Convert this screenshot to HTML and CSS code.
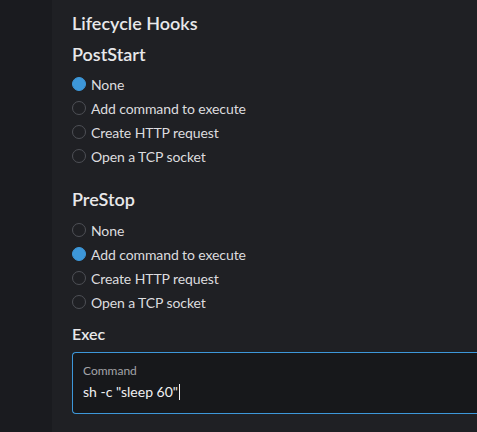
FILE: index.html
```html
<!DOCTYPE html>
<html>
<head>
<meta charset="utf-8">
<link rel="stylesheet" href="styles.css">
</head>
<body>
<div class="layout">
  <aside class="sidebar"></aside>
  <main class="main">
    <h2 class="title">Lifecycle Hooks</h2>
    <section class="hook">
      <h3 class="hook-title">PostStart</h3>
      <div class="options">
        <div class="option"><span class="radio checked"></span>None</div>
        <div class="option"><span class="radio"></span>Add command to execute</div>
        <div class="option"><span class="radio"></span>Create HTTP request</div>
        <div class="option"><span class="radio"></span>Open a TCP socket</div>
      </div>
    </section>
    <section class="hook prestop">
      <h3 class="hook-title">PreStop</h3>
      <div class="options">
        <div class="option"><span class="radio"></span>None</div>
        <div class="option"><span class="radio checked"></span>Add command to execute</div>
        <div class="option"><span class="radio"></span>Create HTTP request</div>
        <div class="option"><span class="radio"></span>Open a TCP socket</div>
      </div>
    </section>
    <h4 class="exec-title">Exec</h4>
    <div class="field">
      <div class="field-label">Command</div>
      <div class="field-value">sh -c "sleep 60"<span class="caret"></span></div>
    </div>
  </main>
</div>
</body>
</html>
```
FILE: styles.css
```css
html, body {
  margin: 0;
  padding: 0;
  background: #1f2024;
  height: 100%;
  overflow: hidden;
}
body {
  font-family: Lato, "Noto Sans", sans-serif;
  color: #e8e8ea;
}
.layout {
  display: flex;
  height: 432px;
}
.sidebar {
  width: 52px;
  flex: none;
  background: #1a1b1f;
}
.main {
  flex: 1;
  padding: 11px 0 0 20px;
  min-width: 0;
}
.title {
  margin: 0;
  font-size: 18px;
  font-weight: 600;
  line-height: 24px;
}
.hook-title {
  margin: 7px 0 0;
  font-size: 18px;
  font-weight: 600;
  line-height: 24px;
}
.options {
  display: flex;
  flex-direction: column;
  margin-top: 6px;
}
.option {
  display: flex;
  align-items: center;
  height: 24px;
  font-size: 14px;
  letter-spacing: -0.1px;
  color: #dcdcdf;
}
.radio {
  width: 12px;
  height: 12px;
  border: 1px solid #4e5056;
  border-radius: 50%;
  margin-right: 5px;
  box-sizing: content-box;
  flex: none;
}
.radio.checked {
  background: #3d97d9;
  border-color: #3d97d9;
}
.prestop {
  margin-top: 19px;
}
.prestop .options {
  margin-top: 7px;
}
.exec-title {
  margin: 8px 0 0;
  font-size: 16px;
  font-weight: 600;
  line-height: 24px;
}
.field {
  margin-top: 6px;
  height: 62px;
  box-sizing: border-box;
  border: 1px solid #3d97d9;
  border-right: none;
  border-radius: 4px 0 0 4px;
  background: #17181b;
  padding: 10px 0 0 10px;
}
.field-label {
  font-size: 12px;
  color: #a3a4a8;
  line-height: 16px;
}
.field-value {
  margin-top: 3px;
  font-size: 14px;
  line-height: 20px;
  color: #f0f0f2;
  display: flex;
  align-items: center;
}
.caret {
  width: 1px;
  height: 16px;
  background: #f0f0f2;
  margin-left: 1px;
}
```
